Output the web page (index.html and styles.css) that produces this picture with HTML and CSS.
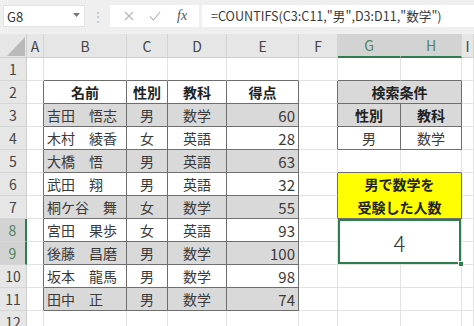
FILE: index.html
```html
<!DOCTYPE html>
<html lang="ja">
<head>
    <meta charset="UTF-8">
    <title>COUNTIFS</title>
    <link rel="stylesheet" href="styles.css">
</head>
<body>
    <div class="toolbar">
        <div class="namebox">
            <span>G8</span>
            <svg class="dropdown" width="7" height="4" viewBox="0 0 7 4"><path d="M0 0h7L3.5 4z" fill="#777"/></svg>
        </div>
        <div class="grip">⋮</div>
        <div class="fxbox">
            <svg width="10" height="10" viewBox="0 0 10 10"><path d="M1 1l8 8M9 1l-8 8" stroke="#b5b5b5" stroke-width="1.1" fill="none"/></svg>
            <svg width="12" height="10" viewBox="0 0 12 10"><path d="M1 5.5l3.5 3.5L11 1" stroke="#b5b5b5" stroke-width="1.1" fill="none"/></svg>
            <span class="fx">fx</span>
        </div>
        <div class="formula">=COUNTIFS(C3:C11,"男",D3:D11,"数学")</div>
    </div>

    <div class="sheet">
        <!-- column headers -->
        <div class="c corner"></div>
        <div class="c ch">A</div>
        <div class="c ch">B</div>
        <div class="c ch">C</div>
        <div class="c ch">D</div>
        <div class="c ch">E</div>
        <div class="c ch">F</div>
        <div class="c ch sel">G</div>
        <div class="c ch sel">H</div>
        <div class="c ch">I</div>

        <!-- row 1 -->
        <div class="c rh">1</div>
        <div class="c"></div>
        <div class="c eb"></div><div class="c eb"></div><div class="c eb"></div><div class="c eb"></div>
        <div class="c"></div>
        <div class="c eb"></div><div class="c eb"></div>
        <div class="c"></div>

        <!-- row 2 -->
        <div class="c rh">2</div>
        <div class="c er"></div>
        <div class="c t b ctr">名前</div>
        <div class="c t b ctr">性別</div>
        <div class="c t b ctr">教科</div>
        <div class="c t b ctr">得点</div>
        <div class="c er"></div>
        <div class="c t g b ctr span2">検索条件</div>
        <div class="c"></div>

        <!-- row 3 -->
        <div class="c rh">3</div>
        <div class="c er"></div>
        <div class="c t g">吉田　悟志</div>
        <div class="c t g ctr">男</div>
        <div class="c t g ctr">数学</div>
        <div class="c t g num">60</div>
        <div class="c er"></div>
        <div class="c t g b ctr">性別</div>
        <div class="c t g b ctr">教科</div>
        <div class="c"></div>

        <!-- row 4 -->
        <div class="c rh">4</div>
        <div class="c er"></div>
        <div class="c t">木村　綾香</div>
        <div class="c t ctr">女</div>
        <div class="c t ctr">英語</div>
        <div class="c t num">28</div>
        <div class="c er"></div>
        <div class="c t ctr">男</div>
        <div class="c t ctr">数学</div>
        <div class="c"></div>

        <!-- row 5 -->
        <div class="c rh">5</div>
        <div class="c er"></div>
        <div class="c t g">大橋　悟</div>
        <div class="c t g ctr">男</div>
        <div class="c t g ctr">英語</div>
        <div class="c t g num">63</div>
        <div class="c"></div>
        <div class="c eb"></div><div class="c eb"></div>
        <div class="c"></div>

        <!-- row 6 -->
        <div class="c rh">6</div>
        <div class="c er"></div>
        <div class="c t">武田　翔</div>
        <div class="c t ctr">男</div>
        <div class="c t ctr">英語</div>
        <div class="c t num">32</div>
        <div class="c er"></div>
        <div class="c t b note">
            <span>男で数学を</span>
            <span>受験した人数</span>
        </div>
        <div class="c"></div>

        <!-- row 7 -->
        <div class="c rh">7</div>
        <div class="c er"></div>
        <div class="c t g">桐ケ谷　舞</div>
        <div class="c t g ctr">女</div>
        <div class="c t g ctr">数学</div>
        <div class="c t g num">55</div>
        <div class="c er"></div>
        <div class="c"></div>

        <!-- row 8 -->
        <div class="c rh sel">8</div>
        <div class="c er"></div>
        <div class="c t">宮田　果歩</div>
        <div class="c t ctr">女</div>
        <div class="c t ctr">英語</div>
        <div class="c t num">93</div>
        <div class="c"></div>
        <div class="c active">4<span class="handle"></span></div>
        <div class="c"></div>

        <!-- row 9 -->
        <div class="c rh sel">9</div>
        <div class="c er"></div>
        <div class="c t g">後藤　昌磨</div>
        <div class="c t g ctr">男</div>
        <div class="c t g ctr">数学</div>
        <div class="c t g num">100</div>
        <div class="c"></div>
        <div class="c"></div>

        <!-- row 10 -->
        <div class="c rh">10</div>
        <div class="c er"></div>
        <div class="c t">坂本　龍馬</div>
        <div class="c t ctr">男</div>
        <div class="c t ctr">数学</div>
        <div class="c t num">98</div>
        <div class="c"></div><div class="c"></div><div class="c"></div><div class="c"></div>

        <!-- row 11 -->
        <div class="c rh">11</div>
        <div class="c er"></div>
        <div class="c t g">田中　正</div>
        <div class="c t g ctr">男</div>
        <div class="c t g ctr">数学</div>
        <div class="c t g num">74</div>
        <div class="c"></div><div class="c"></div><div class="c"></div><div class="c"></div>

        <!-- row 12 -->
        <div class="c rh">12</div>
        <div class="c"></div><div class="c"></div><div class="c"></div><div class="c"></div><div class="c"></div>
        <div class="c"></div><div class="c"></div><div class="c"></div><div class="c"></div>
    </div>
</body>
</html>
```

FILE: styles.css
```css
* {
    margin: 0;
    padding: 0;
    box-sizing: border-box;
}

body {
    width: 474px;
    height: 326px;
    overflow: hidden;
    background: #fff;
    font-family: "Noto Sans CJK JP", sans-serif;
    color: #333;
}

/* formula bar */
.toolbar {
    height: 34px;
    background: #efefef;
    display: flex;
    align-items: flex-start;
    padding: 5px 0 0 3px;
}

.namebox {
    width: 82px;
    height: 22px;
    background: #fff;
    border: 1px solid #e2e2e2;
    display: flex;
    align-items: center;
    justify-content: space-between;
    padding: 0 4px 0 3px;
    font-size: 13px;
    color: #333;
}

.dropdown {
    margin-bottom: 2px;
}

.grip {
    width: 25px;
    height: 22px;
    line-height: 22px;
    text-align: center;
    color: #b8b8b8;
    font-size: 12px;
}

.fxbox {
    width: 89px;
    height: 22px;
    background: #fff;
    display: flex;
    align-items: center;
    justify-content: space-around;
    padding: 0 4px 0 6px;
}

.fx {
    font-family: "Liberation Serif", serif;
    font-style: italic;
    font-size: 14px;
    color: #555;
}

.formula {
    flex: 1;
    height: 22px;
    margin-left: 3px;
    background: #fff;
    padding-left: 9px;
    font-size: 12.6px;
    line-height: 22px;
    color: #3a3a3a;
    white-space: nowrap;
}

/* sheet grid */
.sheet {
    display: grid;
    grid-template-columns: 27px 17px 83px 41px 59px 72px 39px 63px 61px 1fr;
    grid-template-rows: 24px;
    grid-auto-rows: 23px;
    font-size: 14px;
    color: #3a3a3a;
}

.c {
    border-right: 1px solid #e2e2e2;
    border-bottom: 1px solid #e2e2e2;
    display: flex;
    align-items: center;
    padding: 0 3px;
    white-space: pre;
    overflow: hidden;
}

.corner {
    background: #e6e6e6;
    border-right-color: #cfcfcf;
    border-bottom-color: #cfcfcf;
    justify-content: flex-end;
    align-items: flex-end;
    padding: 0 1px 1px 0;
}

.corner::after {
    content: '';
    width: 18px;
    height: 19px;
    background: #b9b9b9;
    clip-path: polygon(100% 0, 100% 100%, 0 100%);
}

.ch {
    background: #e6e6e6;
    border-right-color: #d4d4d4;
    border-bottom-color: #cfcfcf;
    justify-content: center;
    font-size: 14px;
    color: #444;
}

.rh {
    background: #e6e6e6;
    border-right-color: #cfcfcf;
    border-bottom-color: #d6d6d6;
    justify-content: center;
    font-size: 14px;
    color: #444;
}

.ch.sel {
    background: #d3d3d3;
    color: #4f8460;
    border-bottom: 2px solid #2e7d4c;
}

.rh.sel {
    background: #d3d3d3;
    color: #4f8460;
    border-right: 2px solid #2e7d4c;
}

/* table cells */
.t {
    border-right-color: #6e6e6e;
    border-bottom-color: #6e6e6e;
}

.er {
    border-right-color: #6e6e6e;
}

.eb {
    border-bottom-color: #6e6e6e;
}

.g {
    background: #d9d9d9;
}

.b {
    font-weight: bold;
    color: #222;
}

.ctr {
    justify-content: center;
}

.num {
    justify-content: flex-end;
    font-size: 15px;
}

.span2 {
    grid-column: span 2;
}

.note {
    grid-column: span 2;
    grid-row: span 2;
    background: #ffff00;
    flex-direction: column;
    justify-content: center;
    line-height: 23px;
}

.active {
    grid-column: span 2;
    grid-row: span 2;
    position: relative;
    overflow: visible;
    justify-content: center;
    font-size: 22px;
    font-weight: 300;
    box-shadow: inset 0 0 0 2px #2e7d4c;
}

.handle {
    position: absolute;
    right: -3px;
    bottom: -3px;
    width: 6px;
    height: 6px;
    background: #2e7d4c;
    border: 1px solid #fff;
}
```
